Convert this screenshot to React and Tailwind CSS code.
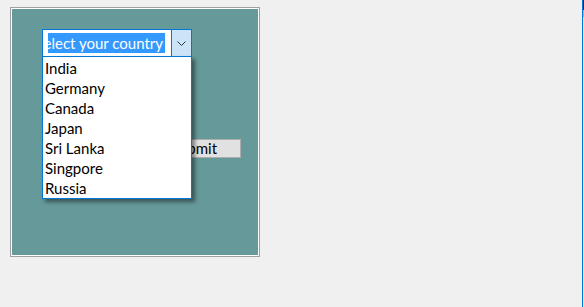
import React from 'react';

const countries = ['India', 'Germany', 'Canada', 'Japan', 'Sri Lanka', 'Singpore', 'Russia'];

export default function App() {
  return (
    <div className="w-[584px] h-[307px] bg-[#f0f0f0] flex overflow-hidden" style={{ fontFamily: 'Lato, "Noto Sans", sans-serif' }}>
      <div className="pl-[10px] pt-[7px]">
        <div className="w-[250px] h-[250px] border border-[#a0a0a0]">
          <div className="h-full border border-white bg-[#669999] pl-[30px] pt-[20px]">
            <div className="relative w-[150px] h-[28px] border border-[#0078d7] bg-white flex">
              <div className="flex-1 flex items-center pl-[5px]">
                <div className="w-[117px] h-[20px] bg-[#3399ff] overflow-hidden flex justify-end items-center">
                  <span className="shrink-0 whitespace-nowrap text-white text-[15px] leading-[20px] pr-[2px]">Select your country</span>
                </div>
              </div>
              <div className="w-[20px] h-full border-l border-[#0078d7] bg-[#cce4f7] flex items-center justify-center">
                <svg width="9" height="5" viewBox="0 0 9 5" fill="none">
                  <path d="M0.5 0.5 L4.5 4.5 L8.5 0.5" stroke="#333" strokeWidth="1" />
                </svg>
              </div>
              <ul className="absolute left-[-1px] top-[26px] w-[150px] bg-white border border-[#0078d7] pt-[1px] shadow-[3px_3px_4px_rgba(0,0,0,0.45)] z-10">
                {countries.map((c) => (
                  <li key={c} className="h-[20px] leading-[20px] pl-[2px] text-[15px] text-black">{c}</li>
                ))}
              </ul>
            </div>
            <button className="mt-[82px] ml-[105px] w-[94px] h-[19px] bg-[#e1e1e1] border border-[#adadad] text-[15px] leading-[17px] text-black">
              Submit
            </button>
          </div>
        </div>
      </div>
      <div className="flex-1" />
      <div className="w-[2px] h-full flex flex-row">
        <div className="w-[1px] h-full bg-[#0078d7]" />
        <div className="w-[1px] h-full flex flex-col">
          <div className="h-[10px] bg-[#0a246a]" />
          <div className="h-[7px] bg-[#9db4cf]" />
          <div className="flex-1 bg-[#dfe4ea]" />
        </div>
      </div>
    </div>
  );
}
